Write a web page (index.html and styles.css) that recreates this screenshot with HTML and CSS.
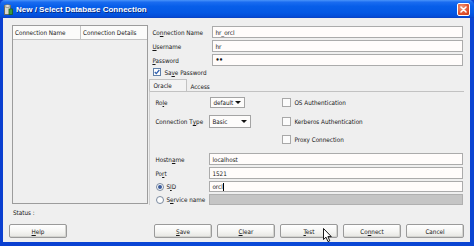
FILE: index.html
```html
<!DOCTYPE html>
<html>
<head>
<meta charset="utf-8">
<link rel="stylesheet" href="styles.css">
</head>
<body>
<div class="window">
  <div class="titlebar">
    <svg class="appicon" width="9" height="11" viewBox="0 0 9 11">
      <rect x="0.5" y="1.5" width="6" height="9" fill="#d8d8d0" stroke="#6a6a60"/>
      <ellipse cx="3.5" cy="2" rx="3" ry="1.3" fill="#f4f4ee" stroke="#6a6a60" stroke-width="0.8"/>
      <rect x="5" y="5" width="3.5" height="5.5" fill="#3c9a3c" stroke="#1d5f1d" stroke-width="0.8"/>
    </svg>
    <span class="title">New / Select Database Connection</span>
    <span class="close">
      <svg width="13" height="13" viewBox="0 0 13 13">
        <path d="M3.5 3.5 L9.5 9.5 M9.5 3.5 L3.5 9.5" stroke="#fff" stroke-width="1.8" stroke-linecap="round"/>
      </svg>
    </span>
  </div>
  <div class="client">
    <div class="main">
      <div class="list">
        <div class="lhead">
          <div class="lcol c1">Connection Name</div>
          <div class="lcol c2">Connection Details</div>
        </div>
      </div>
      <div class="form">
        <div class="frow"><label class="lbl">Co<u>n</u>nection Name</label><div class="field">hr_orcl</div></div>
        <div class="frow"><label class="lbl"><u>U</u>sername</label><div class="field">hr</div></div>
        <div class="frow"><label class="lbl"><u>P</u>assword</label><div class="field pw">••</div></div>
        <div class="chkrow">
          <svg class="cb" width="8" height="8" viewBox="0 0 8 8">
            <rect x="0.5" y="0.5" width="7" height="7" fill="#fdfdfd" stroke="#5f7fa8"/>
            <path d="M1.8 4 L3.3 5.6 L6.3 2" fill="none" stroke="#2f5fb0" stroke-width="1.3"/>
          </svg>
          <span>Sa<u>v</u>e Password</span>
        </div>
        <div class="tabs">
          <div class="tab sel">Oracle</div>
          <div class="tab">Access</div>
        </div>
        <div class="panel">
          <div class="opts">
            <label class="lbl2">Ro<u>l</u>e</label>
            <div class="combo role"><span>default</span><i class="arrow"></i></div>
            <div class="chk"><span class="box"></span>OS Authentication</div>
            <label class="lbl2">Connection T<u>y</u>pe</label>
            <div class="combo ctype"><span>Basic</span><i class="arrow"></i></div>
            <div class="chk"><span class="box"></span>Kerberos Authentication</div>
            <span></span>
            <span></span>
            <div class="chk"><span class="box"></span>Proxy Connection</div>
          </div>
          <div class="conn">
            <label class="lbl2">Hostn<u>a</u>me</label><div class="field">localhost</div>
            <label class="lbl2">Po<u>r</u>t</label><div class="field">1521</div>
            <label class="lbl2 radio"><span class="rb on"></span>S<u>I</u>D</label><div class="field">orcl<span class="caret"></span></div>
            <label class="lbl2 radio"><span class="rb"></span>S<u>e</u>rvice name</label><div class="field disabled"></div>
          </div>
        </div>
      </div>
    </div>
    <div class="status">Status :</div>
    <div class="buttons">
      <button class="btn"><u>H</u>elp</button>
      <div class="rgroup">
        <button class="btn"><u>S</u>ave</button>
        <button class="btn"><u>C</u>lear</button>
        <button class="btn"><u>T</u>est</button>
        <button class="btn">Co<u>n</u>nect</button>
        <button class="btn">Cancel</button>
      </div>
    </div>
  </div>
  <svg class="cursor" width="10" height="15" viewBox="0 0 10 15">
    <path d="M0.5 0.5 L0.5 11.5 L3 9.2 L5 13.6 L6.8 12.8 L4.9 8.6 L8.3 8.6 Z" fill="#fff" stroke="#000" stroke-width="0.9" stroke-linejoin="round"/>
  </svg>
</div>
</body>
</html>
```
FILE: styles.css
```css
* { box-sizing: border-box; }
html, body { margin: 0; padding: 0; }
body {
  width: 474px;
  height: 246px;
  overflow: hidden;
  font-family: "DejaVu Sans Condensed", "Liberation Sans", Arial, sans-serif;
  font-size: 6.3px;
  color: #151515;
  background: #0a47d6;
}
u { text-decoration: underline; text-underline-offset: 0.5px; text-decoration-thickness: 0.6px; }

.window {
  position: relative;
  width: 474px;
  height: 246px;
  display: flex;
  flex-direction: column;
  background: linear-gradient(90deg, #0a3fd0, #0a4ad8 50%, #0a44d2);
}

.titlebar {
  height: 19px;
  display: flex;
  align-items: center;
  padding: 0 4px 0 4px;
  background: linear-gradient(180deg, #4a94fa 0%, #1a6cf0 12%, #075ee9 35%, #0458e4 70%, #034ed9 90%, #0a40c2 100%);
  border-radius: 5px 5px 0 0;
}
.appicon { margin-right: 3px; margin-top: 1px; }
.title {
  color: #fff;
  font-family: "Liberation Sans", Arial, sans-serif;
  font-weight: bold;
  font-size: 8px;
  text-shadow: 1px 1px 0 #0a2a80;
  flex: 1;
}
.close {
  width: 13px;
  height: 13px;
  margin-top: 1px;
  border: 1px solid #fff;
  border-radius: 2px;
  background: radial-gradient(circle at 35% 30%, #f29a7a, #e0522e 60%, #c93a18);
  display: flex;
  align-items: center;
  justify-content: center;
}
.close svg { width: 11px; height: 11px; }

.client {
  flex: 1;
  margin: 0 4px 4px 3px;
  background: #efefef;
  display: flex;
  flex-direction: column;
  padding: 7px 6px 4px 9px;
}

.main {
  display: flex;
  height: 180px;
}

.list {
  width: 137px;
  height: 179px;
  border: 1px solid #9c9c9c;
  background: #efefef;
}
.lhead {
  display: flex;
  height: 14px;
  background: #fbfbfa;
  border-bottom: 1px solid #c4c4c4;
}
.lcol {
  display: flex;
  align-items: center;
  padding-left: 2px;
  white-space: nowrap;
}
.c1 { width: 68px; border-right: 1px solid #c4c4c4; }
.c2 { flex: 1; }

.form {
  width: 316px;
  margin-left: 1px;
  padding-top: 1px;
  display: flex;
  flex-direction: column;
}
.frow {
  display: grid;
  grid-template-columns: 63px 251px;
  height: 12px;
  margin-bottom: 2px;
  align-items: center;
}
.lbl { padding-left: 3px; white-space: nowrap; }

.field {
  height: 12px;
  border: 1px solid #ababab;
  background: #fffcfb;
  padding-left: 2px;
  display: flex;
  align-items: center;
  white-space: nowrap;
}
.field.pw { font-weight: bold; font-size: 7px; letter-spacing: -0.5px; }
.field.disabled { background: #c5c5c5; border-color: #b0b0b0; }
.caret {
  display: inline-block;
  width: 1px;
  height: 8px;
  background: #000;
  margin-left: 0.5px;
}

.chkrow {
  height: 10px;
  margin-top: -1px;
  display: flex;
  align-items: center;
  padding-left: 4px;
}
.chkrow .cb { margin-right: 3px; }

.tabs {
  display: flex;
  height: 12px;
  margin-top: 2px;
  align-items: stretch;
}
.tab {
  display: flex;
  align-items: center;
  padding: 0 3px;
}
.tab.sel {
  width: 38px;
  border: 1px solid #c2c2c2;
  border-bottom: none;
  background: #f3f3f3;
}
.tab:not(.sel) { padding-left: 3px; padding-top: 2px; }

.panel {
  flex: 1;
  border-top: 1px solid #c2c2c2;
  border-left: 1px solid #d0d0d0;
  padding: 3px 0 0 5px;
}
.opts {
  display: grid;
  grid-template-columns: 54px 73px 1fr;
  grid-template-rows: 14px 15px 11px;
  row-gap: 5px;
  align-items: center;
}
.lbl2 { white-space: nowrap; display: flex; align-items: center; }
.combo {
  height: 100%;
  border: 1px solid #a4a4a4;
  background: #fdfcfb;
  display: flex;
  align-items: center;
  justify-content: space-between;
  padding: 0 3px 0 2px;
}
.combo.role { width: 35px; height: 11px; margin-left: 1px; }
.combo.ctype { width: 42px; height: 13px; }
.arrow {
  width: 0;
  height: 0;
  border-left: 3px solid transparent;
  border-right: 3px solid transparent;
  border-top: 3px solid #111;
}
.chk { display: flex; align-items: center; white-space: nowrap; }
.box {
  width: 9px;
  height: 9px;
  border: 1px solid #a8a8a8;
  background: #fbfbfb;
  margin-right: 3px;
  display: inline-block;
}

.conn {
  margin-top: 8px;
  display: grid;
  grid-template-columns: 54px 254px;
  grid-template-rows: 12px 12px 11px 11px;
  row-gap: 2px;
  align-items: center;
}
.conn .field { height: 100%; }
.radio { padding-left: 1px; }
.rb {
  width: 8px;
  height: 8px;
  border-radius: 50%;
  border: 1px solid #7a8aa0;
  background: #fcfcfc;
  margin-right: 2px;
  display: inline-flex;
  align-items: center;
  justify-content: center;
}
.rb.on::after {
  content: "";
  width: 4px;
  height: 4px;
  border-radius: 50%;
  background: #3a5a9a;
}

.status {
  height: 8px;
  margin-top: 3px;
  display: flex;
  align-items: center;
  padding-left: 1px;
}

.buttons {
  display: flex;
  margin-top: 8px;
  margin-left: -3px;
  height: 14px;
}
.rgroup {
  margin-left: auto;
  display: flex;
  gap: 5px;
}
.btn {
  width: 58px;
  height: 14px;
  padding: 0;
  font-family: "DejaVu Sans Condensed", "Liberation Sans", Arial, sans-serif;
  font-size: 6.3px;
  color: #151515;
  border: 1px solid #9a9a9a;
  border-radius: 2px;
  background: linear-gradient(180deg, #ffffff 0%, #f6f6f4 50%, #e6e6e2 100%);
  box-shadow: inset -1px -1px 0 #d4d4d0;
}

.cursor {
  position: absolute;
  left: 323px;
  top: 228px;
}
```
